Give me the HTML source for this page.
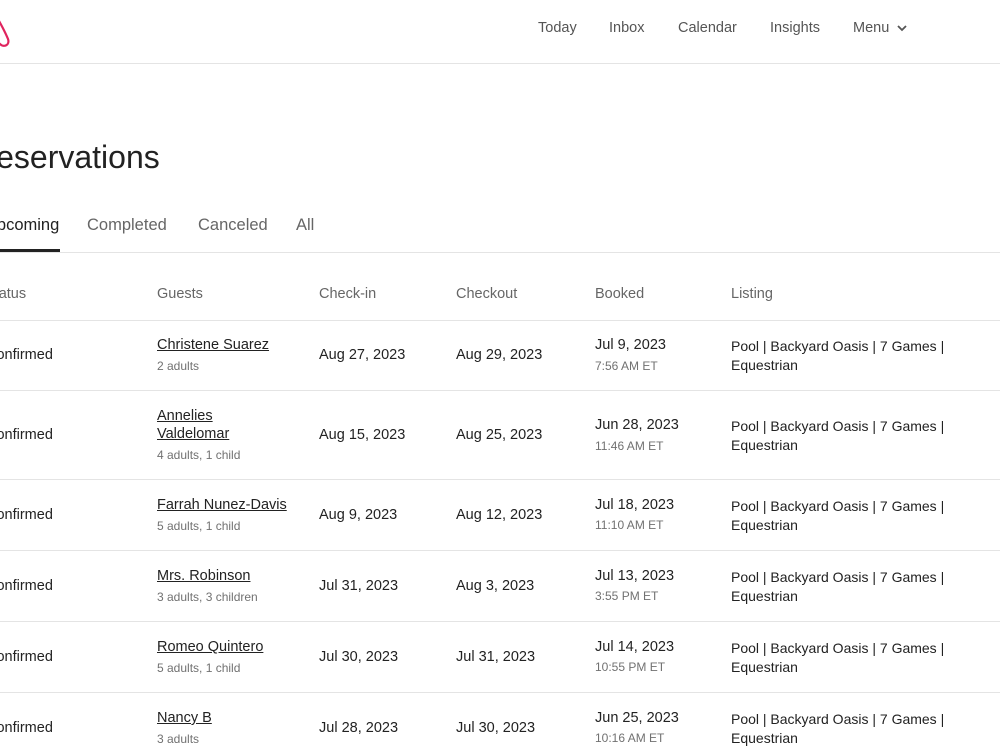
<!DOCTYPE html>
<html><head><style>
body{margin:0;width:1000px;height:750px;overflow:hidden;background:#fff;font-family:"Liberation Sans",sans-serif;color:#222;position:relative}
.a{position:absolute;white-space:nowrap}
.nav{top:20px;font-size:14.5px;color:#555}
.hr{position:absolute;left:0;width:1000px;height:1px;background:#e4e4e4}
.th{top:286px;font-size:14.5px;color:#666}
.s{font-size:14.5px;color:#222}
.l{font-size:14px;color:#222;line-height:19px}
.g{font-size:14.5px;color:#222;text-decoration:underline;line-height:18px}
.sm{font-size:12px;color:#717171}
</style></head><body>
<svg class="a" style="left:-20px;top:12px" width="32" height="36" viewBox="0 0 32 36"><path d="M16 4 C20 10 26 22 28 27 C30 33 24 36 20 32 L16 28" fill="none" stroke="#e0245e" stroke-width="2.2"/></svg>
<div class="a nav" style="left:538px">Today</div>
<div class="a nav" style="left:609px">Inbox</div>
<div class="a nav" style="left:678px">Calendar</div>
<div class="a nav" style="left:770px">Insights</div>
<div class="a nav" style="left:853px">Menu <svg width="10" height="8" viewBox="0 0 10 8" style="margin-left:4px"><path d="M1 2 L5 6 L9 2" fill="none" stroke="#555" stroke-width="1.8"/></svg></div>
<div class="hr" style="top:63px"></div>
<div class="a" style="left:-27px;top:139px;font-size:32px;color:#222">Reservations</div>
<div class="a" style="left:-15px;top:216px;font-size:16.5px;color:#222">Upcoming</div>
<div class="a" style="left:0;top:249px;width:60px;height:3px;background:#222"></div>
<div class="a" style="left:87px;top:216px;font-size:16.5px;color:#666">Completed</div>
<div class="a" style="left:198px;top:216px;font-size:16.5px;color:#666">Canceled</div>
<div class="a" style="left:296px;top:216px;font-size:16.5px;color:#666">All</div>
<div class="hr" style="top:252px"></div>
<div class="a th" style="left:-15px">Status</div>
<div class="a th" style="left:157px">Guests</div>
<div class="a th" style="left:319px">Check-in</div>
<div class="a th" style="left:456px">Checkout</div>
<div class="a th" style="left:595px">Booked</div>
<div class="a th" style="left:731px">Listing</div>
<div class="hr" style="top:320px"></div>
<div class="hr" style="top:390px"></div>
<div class="hr" style="top:479px"></div>
<div class="hr" style="top:550px"></div>
<div class="hr" style="top:621px"></div>
<div class="hr" style="top:692px"></div>

<div class="a s" style="left:-14px;top:347px">Confirmed</div>
<div class="a g" style="left:157px;top:336px">Christene Suarez</div>
<div class="a sm" style="left:157px;top:359px">2 adults</div>
<div class="a s" style="left:319px;top:347px">Aug 27, 2023</div>
<div class="a s" style="left:456px;top:347px">Aug 29, 2023</div>
<div class="a s" style="left:595px;top:337px">Jul 9, 2023</div>
<div class="a sm" style="left:595px;top:359px">7:56 AM ET</div>
<div class="a l" style="left:731px;top:337px">Pool | Backyard Oasis | 7 Games |<br>Equestrian</div>

<div class="a s" style="left:-14px;top:427px">Confirmed</div>
<div class="a g" style="left:157px;top:407px">Annelies<br>Valdelomar</div>
<div class="a sm" style="left:157px;top:448px">4 adults, 1 child</div>
<div class="a s" style="left:319px;top:427px">Aug 15, 2023</div>
<div class="a s" style="left:456px;top:427px">Aug 25, 2023</div>
<div class="a s" style="left:595px;top:417px">Jun 28, 2023</div>
<div class="a sm" style="left:595px;top:439px">11:46 AM ET</div>
<div class="a l" style="left:731px;top:417px">Pool | Backyard Oasis | 7 Games |<br>Equestrian</div>

<div class="a s" style="left:-14px;top:507px">Confirmed</div>
<div class="a g" style="left:157px;top:496px">Farrah Nunez-Davis</div>
<div class="a sm" style="left:157px;top:519px">5 adults, 1 child</div>
<div class="a s" style="left:319px;top:507px">Aug 9, 2023</div>
<div class="a s" style="left:456px;top:507px">Aug 12, 2023</div>
<div class="a s" style="left:595px;top:497px">Jul 18, 2023</div>
<div class="a sm" style="left:595px;top:518px">11:10 AM ET</div>
<div class="a l" style="left:731px;top:497px">Pool | Backyard Oasis | 7 Games |<br>Equestrian</div>

<div class="a s" style="left:-14px;top:578px">Confirmed</div>
<div class="a g" style="left:157px;top:567px">Mrs. Robinson</div>
<div class="a sm" style="left:157px;top:590px">3 adults, 3 children</div>
<div class="a s" style="left:319px;top:578px">Jul 31, 2023</div>
<div class="a s" style="left:456px;top:578px">Aug 3, 2023</div>
<div class="a s" style="left:595px;top:568px">Jul 13, 2023</div>
<div class="a sm" style="left:595px;top:589px">3:55 PM ET</div>
<div class="a l" style="left:731px;top:568px">Pool | Backyard Oasis | 7 Games |<br>Equestrian</div>

<div class="a s" style="left:-14px;top:649px">Confirmed</div>
<div class="a g" style="left:157px;top:638px">Romeo Quintero</div>
<div class="a sm" style="left:157px;top:661px">5 adults, 1 child</div>
<div class="a s" style="left:319px;top:649px">Jul 30, 2023</div>
<div class="a s" style="left:456px;top:649px">Jul 31, 2023</div>
<div class="a s" style="left:595px;top:639px">Jul 14, 2023</div>
<div class="a sm" style="left:595px;top:660px">10:55 PM ET</div>
<div class="a l" style="left:731px;top:639px">Pool | Backyard Oasis | 7 Games |<br>Equestrian</div>

<div class="a s" style="left:-14px;top:720px">Confirmed</div>
<div class="a g" style="left:157px;top:709px">Nancy B</div>
<div class="a sm" style="left:157px;top:732px">3 adults</div>
<div class="a s" style="left:319px;top:720px">Jul 28, 2023</div>
<div class="a s" style="left:456px;top:720px">Jul 30, 2023</div>
<div class="a s" style="left:595px;top:710px">Jun 25, 2023</div>
<div class="a sm" style="left:595px;top:731px">10:16 AM ET</div>
<div class="a l" style="left:731px;top:710px">Pool | Backyard Oasis | 7 Games |<br>Equestrian</div>
</body></html>
